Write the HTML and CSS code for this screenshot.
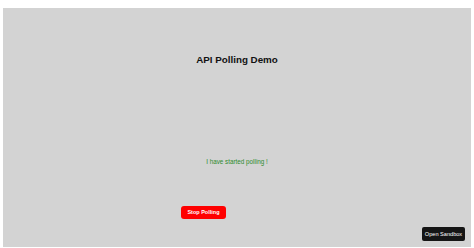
FILE: index.html
```html
<!DOCTYPE html>
<html>
<head>
<meta charset="utf-8">
<link rel="stylesheet" href="styles.css">
</head>
<body>
<div class="app">
  <h1 class="title">API Polling Demo</h1>
  <p class="status">I have started polling !</p>
  <div class="actions">
    <button class="stop">Stop Polling</button>
  </div>
  <button class="sandbox">Open Sandbox</button>
</div>
</body>
</html>
```
FILE: styles.css
```css
html, body {
  margin: 0;
  padding: 0;
  background: #ffffff;
}
body {
  padding: 8px 3px 1px 3px;
  font-family: "Liberation Sans", Arial, sans-serif;
}
.app {
  position: relative;
  height: 239px;
  background: #d3d3d3;
  display: flex;
  flex-direction: column;
  align-items: center;
}
.title {
  margin: 46px 0 0 0;
  font-size: 9.8px;
  line-height: 12px;
  font-weight: bold;
  color: #111;
}
.status {
  margin: 91px 0 0 0;
  font-size: 6.3px;
  line-height: 9px;
  color: #2e8b2e;
}
.actions {
  align-self: stretch;
  margin-top: 34px;
  padding-left: 178px;
}
.stop {
  width: 45px;
  height: 13px;
  border: none;
  border-radius: 3px;
  background: #ff0000;
  color: #fff;
  font-family: "Liberation Sans", Arial, sans-serif;
  font-size: 5.5px;
  font-weight: bold;
  padding: 0;
}
.sandbox {
  position: absolute;
  right: 6px;
  bottom: 6px;
  width: 43px;
  height: 14px;
  border: none;
  border-radius: 2px;
  background: #151515;
  color: #fff;
  font-family: "Liberation Sans", Arial, sans-serif;
  font-size: 5.6px;
  padding: 0;
}
```
